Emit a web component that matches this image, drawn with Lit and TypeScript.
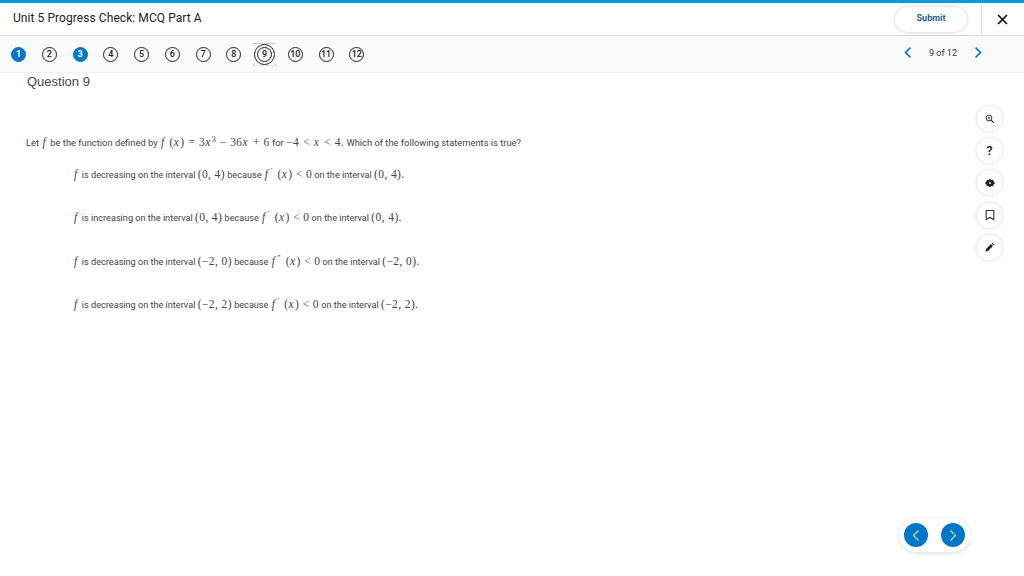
import { LitElement, html, css, svg } from "lit";
import { customElement } from "lit/decorators.js";

const m = (s: string) => html`<span class="m">${s}</span>`;
const v = (s: string) => html`<span class="v">${s}</span>`;
const f = () => html`<span class="v f">f</span>`;
const fx = (p: string) => html`${f()}${p ? html`<span class="pr">${p}</span>` : ""}<span class="m sp">(</span><span class="v">x</span><span class="m">)</span>`;
const op = (s: string) => html`<span class="op">${s}</span>`;

@customElement("app-root")
export class AppRoot extends LitElement {
  static styles = css`
    :host { display: block; position: relative; width: 1024px; height: 576px; background: #fff; overflow: hidden; font-family: Roboto, sans-serif; color: #333; }
    .accent { height: 3px; background: #0a9bdc; }
    .head { height: 32px; display: flex; align-items: center; padding-left: 13px; border-bottom: 1px solid #d9d9d9; }
    .title { flex: 1; font-size: 12px; color: #222; letter-spacing: 0.07px; padding-bottom: 2px; }
    .submit { width: 72px; height: 25px; border: 0; border-radius: 13px; background: #fff; box-shadow: 0 0 3px rgba(0,0,0,.25); font: 700 9px Roboto, sans-serif; color: #1d5f8f; padding: 0 0 2px 0; }
    .sep { width: 1px; height: 29px; background: #d9d9d9; margin-left: 14px; }
    .close { width: 40px; padding-right: 2px; display: flex; justify-content: center; }
    .nav { height: 36px; display: flex; align-items: center; padding-left: 11px; background: #fafafa; border-bottom: 1px solid #f0f0f0; }
    .steps { flex: 1; display: flex; gap: 15.75px; }
    .step { position: relative; width: 15px; height: 15px; box-sizing: border-box; border-radius: 50%; border: 1px solid #222; font-size: 9px; font-weight: 500; display: flex; align-items: center; justify-content: center; color: #222; }
    .step.done { background: #0277c8; border-color: #0277c8; color: #fff; font-weight: 700; }
    .step.cur::before { content: ""; position: absolute; inset: -4px; border-radius: 50%; border: 1px solid #222; }
    .step.cur::after { content: ""; position: absolute; inset: -5px; border: 1px solid #ccc; clip-path: polygon(0 0, 100% 0, 100% 6%, 0 6%, 0 94%, 100% 94%, 100% 100%, 0 100%); }
    .pager { display: flex; align-items: center; margin: 0 41px 3px 0; }
    .count { width: 60px; text-align: center; font-size: 9px; color: #333; }
    .q { font-family: "Liberation Sans", sans-serif; font-size: 13px; line-height: 18px; padding-left: 27px; color: #444; }
    .body { padding: 42px 0 0 26px; font-size: 9.15px; color: #444; }
    .stem { height: 18px; line-height: 18px; white-space: nowrap; font-size: 9.35px; }
    .stem .op { margin: 0 4px; }
    .opts { padding: 14px 0 0 47px; display: flex; flex-direction: column; gap: 25.4px; }
    .opt { height: 18px; line-height: 18px; white-space: nowrap; }
    .m, .v { font-family: "Liberation Serif", serif; font-size: 11.5px; color: #444; letter-spacing: .4px; }
    .v { font-style: italic; padding-right: 1px; }
    .f { margin: 0 1px; }
    .m.sp { margin-left: 3px; }
    .op { margin: 0 3.5px; font-family: "Liberation Serif", serif; font-size: 11.5px; }
    .pr { font-family: "DejaVu Sans", sans-serif; font-size: 9px; vertical-align: 3px; line-height: 0; padding-right: 2px; }
    sup { font-family: "Liberation Serif", serif; font-size: 8px; line-height: 0; vertical-align: 4px; }
    .tools { position: absolute; left: 977px; top: 106px; display: flex; flex-direction: column; gap: 7.2px; }
    .tool { width: 25px; height: 25px; border-radius: 50%; background: #fff; box-shadow: 0 0 4px rgba(0,0,0,.16); display: flex; align-items: center; justify-content: center; font: 500 13px Roboto, sans-serif; color: #222; }
    .float { position: absolute; left: 899px; top: 518px; width: 71px; height: 34px; border-radius: 17px; background: #fff; box-shadow: 0 1px 4px rgba(0,0,0,.15); display: flex; align-items: center; justify-content: center; gap: 13px; }
    .round { width: 24px; height: 24px; border-radius: 50%; background: #0277c8; display: flex; align-items: center; justify-content: center; }
    svg { display: block; }
  `;

  private chev(dir: "l" | "r", color: string, w: number, h: number, sw: number) {
    const d = dir === "l" ? "M9 2 L3 8 L9 14" : "M3 2 L9 8 L3 14";
    return html`<svg width=${w} height=${h} viewBox="0 0 12 16" fill="none"><path d=${d} stroke=${color} stroke-width=${sw}/></svg>`;
  }

  private tools() {
    const icons = [
      svg`<circle cx="6" cy="6" r="2.9" fill="none" stroke="#222" stroke-width=".9"/><path d="M4.6 6h2.8M6 4.6v2.8" stroke="#222" stroke-width=".7"/><path d="M8.2 8.2l2.6 2.6" stroke="#222" stroke-width="1.1"/>`,
      null,
      svg`<g transform="translate(7 7) scale(.82) translate(-7 -7)"><path d="M7 1.5l1.5 1.9 2.4-.4.5 2.3L13.2 7l-1.8 1.7-.5 2.3-2.4-.4L7 12.5l-1.5-1.9-2.4.4-.5-2.3L.8 7l1.8-1.7.5-2.3 2.4.4z" fill="#222"/><circle cx="7" cy="7" r="1.1" fill="#fff"/></g>`,
      svg`<path d="M3.2 2.5h7.6v9L7 9.4 3.2 11.5z" fill="none" stroke="#333" stroke-width="1.1"/>`,
      svg`<path d="M2.5 11.5l.6-2.6 4.8-4.8 2 2-4.8 4.8z" fill="#222"/><path d="M8.6 3.4l.8-.7 1.9 1.9-.7.8z" fill="#222"/>`,
    ];
    return icons.map((i) => html`<div class="tool">${i ? html`<svg width="14" height="14" viewBox="0 0 14 14">${i}</svg>` : "?"}</div>`);
  }

  render() {
    const steps = [1, 2, 3, 4, 5, 6, 7, 8, 9, 10, 11, 12];
    return html`
      <div class="accent"></div>
      <div class="head">
        <div class="title">Unit 5 Progress Check: MCQ Part A</div>
        <button class="submit">Submit</button>
        <div class="sep"></div>
        <div class="close"><svg width="11" height="11" viewBox="0 0 11 11"><path d="M1 1L10 10M10 1L1 10" stroke="#111" stroke-width="1.7"/></svg></div>
      </div>
      <div class="nav">
        <div class="steps">
          ${steps.map((n) => html`<div class="step ${n === 1 || n === 3 ? "done" : ""} ${n === 9 ? "cur" : ""}">${n}</div>`)}
        </div>
        <div class="pager">
          ${this.chev("l", "#0277c8", 10, 13, 1.9)}
          <div class="count">9 of 12</div>
          ${this.chev("r", "#0277c8", 10, 13, 1.9)}
        </div>
      </div>
      <div class="q">Question 9</div>
      <div class="body">
        <div class="stem">Let ${f()} be the function defined by ${fx("")}${op("=")}${m("3")}${v("x")}<sup>3</sup>${op("−")}${m("36")}${v("x")}${op("+")}${m("6")} for ${m("−4")}${op("<")}${v("x")}${op("<")}${m("4.")} Which of the following statements is true?</div>
        <div class="opts">
          <div class="opt">${f()} is decreasing on the interval ${m("(0, 4)")} because ${fx("′")}${op("<")}${m("0")} on the interval ${m("(0, 4).")}</div>
          <div class="opt">${f()} is increasing on the interval ${m("(0, 4)")} because ${fx("′")}${op("<")}${m("0")} on the interval ${m("(0, 4).")}</div>
          <div class="opt">${f()} is decreasing on the interval ${m("(−2, 0)")} because ${fx("″")}${op("<")}${m("0")} on the interval ${m("(−2, 0).")}</div>
          <div class="opt">${f()} is decreasing on the interval ${m("(−2, 2)")} because ${fx("′")}${op("<")}${m("0")} on the interval ${m("(−2, 2).")}</div>
        </div>
      </div>
      <div class="tools">${this.tools()}</div>
      <div class="float">
        <div class="round">${this.chev("l", "#fff", 10, 13, 1.3)}</div>
        <div class="round">${this.chev("r", "#fff", 10, 13, 1.3)}</div>
      </div>
    `;
  }
}
